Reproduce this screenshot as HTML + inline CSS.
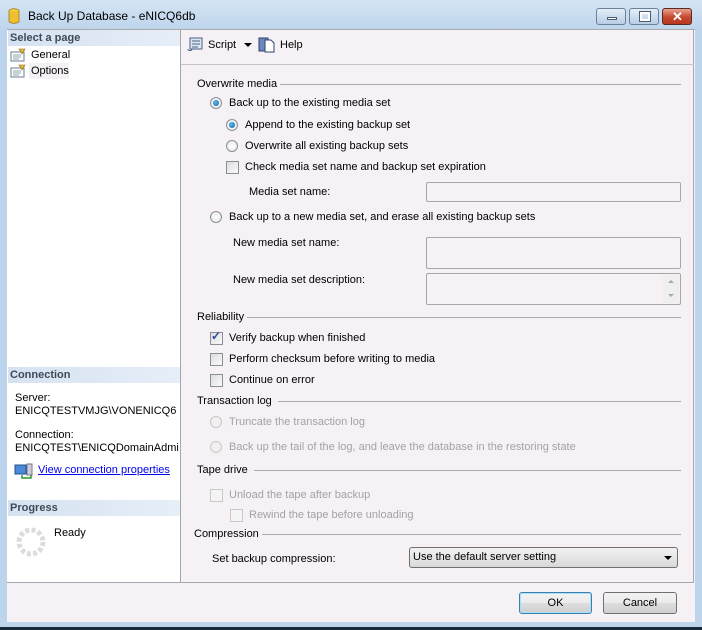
<!DOCTYPE html>
<html><head><style>
*{margin:0;padding:0;box-sizing:border-box}
body{width:702px;height:630px;overflow:hidden;background:#bcd4ec;font-family:"Liberation Sans",Arial,sans-serif;font-size:11px;color:#000;position:relative}
.a{position:absolute;white-space:nowrap}
.t{line-height:13px}
.title{left:0;top:0;width:702px;height:29px;background:linear-gradient(#d5e4f4,#bed5ec)}
.hdr{position:absolute;left:8px;width:172px;height:16px;background:linear-gradient(90deg,#d6e2f1,#e6eef8);font-weight:bold;color:#3e4a57;font-size:11px;line-height:16px;padding-left:2px}
.radio{position:absolute;width:12px;height:12px;border-radius:50%;border:1px solid #8a9199;background:radial-gradient(circle,#fff 0,#e4e4e4 100%)}
.radio.on::after{content:"";position:absolute;left:2px;top:2px;width:6px;height:6px;border-radius:50%;background:radial-gradient(circle at 40% 40%,#5cc0f0,#0a5a9c)}
.radio.dis{border-color:#c9c9c9;background:#f0f0f0}
.cb{position:absolute;width:13px;height:13px;border:1px solid #8a8f96;background:linear-gradient(135deg,#dcdcdc,#fafafa)}
.cb.dis{border-color:#c9c9c9;background:#f4f4f4}
.line{position:absolute;height:1px;background:#a9a9a9}
.box{position:absolute;border:1px solid #a7a7a7;border-radius:2px;background:#f5f1f5}
.gray{color:#a3a3a3}
.btn{position:absolute;height:22px;border:1px solid #707070;border-radius:3px;background:linear-gradient(#f2f2f2 0,#ebebeb 50%,#dddddd 51%,#cfcfcf 100%);text-align:center;line-height:20px}
</style></head><body>
<div class="a title"></div>
<svg class="a" style="left:8px;top:8px" width="12" height="16"><ellipse cx="6" cy="3" rx="5" ry="2.2" fill="#f7d64a" stroke="#a07a10" stroke-width=".8"/><path d="M1 3v10c0 1.3 2.2 2.3 5 2.3s5-1 5-2.3V3" fill="#f0c030" stroke="#a07a10" stroke-width=".8"/></svg>
<div class="a t" style="left:28px;top:10px;font-size:12px">Back Up Database - eNICQ6db</div>
<div class="a" style="left:596px;top:8px;width:30px;height:17px;border:1px solid #6a7f9a;border-radius:3px;background:linear-gradient(#e4eef9,#b8cde4)"><div class="a" style="left:10px;top:8px;width:10px;height:3px;background:#fff;border:1px solid #4b5c70"></div></div>
<div class="a" style="left:629px;top:8px;width:30px;height:17px;border:1px solid #6a7f9a;border-radius:3px;background:linear-gradient(#e4eef9,#b8cde4)"><div class="a" style="left:10px;top:3px;width:10px;height:9px;border:2px solid #fff;outline:1px solid #4b5c70"></div></div>
<div class="a" style="left:662px;top:8px;width:30px;height:17px;border:1px solid #5a2a20;border-radius:3px;background:linear-gradient(#e9a18f,#c4472e 55%,#b8381f)"><div class="a" style="left:9px;top:0;color:#fff;font-weight:bold;font-size:13px;line-height:15px">✕</div></div>

<!-- client -->
<div class="a" style="left:7px;top:29px;width:688px;height:593px;background:#f5f1f5;border-top:1px solid #a9a9a9"></div>
<div class="a" style="left:7px;top:30px;width:174px;height:553px;background:#fff;border-right:1px solid #a6a6ae;border-bottom:1px solid #a6a6ae"></div>
<div class="a" style="left:181px;top:30px;width:513px;height:553px;border-right:1px solid #a6a6ae;border-bottom:1px solid #a6a6ae"></div>
<div class="a" style="left:181px;top:64px;width:513px;height:1px;background:#c6c3c8"></div>
<div class="a" style="left:0;top:627px;width:702px;height:3px;background:#1a2a3a"></div>

<div class="hdr" style="top:30px">Select a page</div>
<svg class="a" style="left:10px;top:48px" width="18" height="14"><rect x="1" y="4" width="13" height="9" fill="#fff" stroke="#6b7b99"/><path d="M3 7h8M3 9h8M3 11h6" stroke="#8aa"/><path d="M9 1l6 0 -3 5z" fill="#e5b832" stroke="#8a6a10" stroke-width=".6"/></svg>
<div class="a t" style="left:31px;top:49px">General</div>
<div class="a" style="left:29px;top:63px;width:40px;height:16px;background:#f3f1f3"></div>
<svg class="a" style="left:10px;top:64px" width="18" height="14"><rect x="1" y="4" width="13" height="9" fill="#fff" stroke="#6b7b99"/><path d="M3 7h8M3 9h8M3 11h6" stroke="#8aa"/><path d="M9 1l6 0 -3 5z" fill="#e5b832" stroke="#8a6a10" stroke-width=".6"/></svg>
<div class="a t" style="left:31px;top:65px">Options</div>

<div class="hdr" style="top:367px">Connection</div>
<div class="a t" style="left:15px;top:392px">Server:</div>
<div class="a t" style="left:15px;top:405px;width:164px;overflow:hidden">ENICQTESTVMJG\VONENICQ6</div>
<div class="a t" style="left:15px;top:429px">Connection:</div>
<div class="a t" style="left:15px;top:442px;width:164px;overflow:hidden">ENICQTEST\ENICQDomainAdmin</div>
<svg class="a" style="left:14px;top:463px" width="20" height="16"><rect x="1" y="2" width="11" height="9" fill="#4a8ad8" stroke="#23508a"/><rect x="13" y="1" width="5" height="11" fill="#ccd" stroke="#778"/><path d="M8 12v3h9v-3" fill="none" stroke="#2a9a2a" stroke-width="1.5"/></svg>
<div class="a t" style="left:38px;top:464px;color:#0000ee;text-decoration:underline">View connection properties</div>

<div class="hdr" style="top:500px">Progress</div>
<svg class="a" style="left:15px;top:526px" width="32" height="32"><circle cx="16" cy="16" r="12" fill="none" stroke="#dcdcdc" stroke-width="5" stroke-dasharray="4 2.3"/></svg>
<div class="a t" style="left:54px;top:527px">Ready</div>

<!-- toolbar -->
<svg class="a" style="left:187px;top:36px" width="18" height="17"><path d="M3 2h12v11H3z" fill="#dfe7f3" stroke="#4a5f86"/><path d="M1 13c0 2 4 2 4 0M5 5h8M5 8h8M5 11h6" stroke="#4a5f86" fill="none"/></svg>
<div class="a t" style="left:208px;top:39px">Script</div>
<div class="a" style="left:244px;top:43px;border-left:4px solid transparent;border-right:4px solid transparent;border-top:4px solid #000"></div>
<svg class="a" style="left:258px;top:36px" width="18" height="17"><rect x="1" y="2" width="9" height="13" fill="#6d88b8" stroke="#2d4470"/><path d="M7 4h6l3 3v9H7z" fill="#fff" stroke="#2d4470"/></svg>
<div class="a t" style="left:280px;top:39px">Help</div>

<!-- content -->
<div class="a t" style="left:197px;top:78px">Overwrite media</div><div class="line" style="left:280px;top:84px;width:401px"></div>
<div class="radio on" style="left:210px;top:97px"></div><div class="a t" style="left:229px;top:97px">Back up to the existing media set</div>
<div class="radio on" style="left:226px;top:119px"></div><div class="a t" style="left:245px;top:119px">Append to the existing backup set</div>
<div class="radio" style="left:226px;top:140px"></div><div class="a t" style="left:245px;top:140px">Overwrite all existing backup sets</div>
<div class="cb" style="left:226px;top:161px"></div><div class="a t" style="left:245px;top:161px">Check media set name and backup set expiration</div>
<div class="a t" style="left:249px;top:186px">Media set name:</div>
<div class="box" style="left:426px;top:182px;width:255px;height:20px"></div>
<div class="radio" style="left:210px;top:211px"></div><div class="a t" style="left:229px;top:211px">Back up to a new media set, and erase all existing backup sets</div>
<div class="a t" style="left:233px;top:237px">New media set name:</div>
<div class="box" style="left:426px;top:237px;width:255px;height:32px"></div>
<div class="a t" style="left:233px;top:274px">New media set description:</div>
<div class="box" style="left:426px;top:273px;width:255px;height:32px"></div>
<div class="a" style="left:663px;top:275px;width:16px;height:28px;background:#efefef"></div>
<div class="a" style="left:668px;top:280px;border-left:3px solid transparent;border-right:3px solid transparent;border-bottom:3px solid #aaa"></div>
<div class="a" style="left:668px;top:294px;border-left:3px solid transparent;border-right:3px solid transparent;border-top:3px solid #aaa"></div>

<div class="a t" style="left:197px;top:311px">Reliability</div><div class="line" style="left:247px;top:317px;width:434px"></div>
<div class="cb" style="left:210px;top:332px"></div><div class="a" style="left:211px;top:329px;color:#2a4a9a;font-size:12px;font-weight:bold">✓</div><div class="a t" style="left:229px;top:332px">Verify backup when finished</div>
<div class="cb" style="left:210px;top:353px"></div><div class="a t" style="left:229px;top:353px">Perform checksum before writing to media</div>
<div class="cb" style="left:210px;top:374px"></div><div class="a t" style="left:229px;top:374px">Continue on error</div>
<div class="a t" style="left:197px;top:395px">Transaction log</div><div class="line" style="left:278px;top:401px;width:403px"></div>
<div class="radio dis" style="left:210px;top:416px"></div><div class="a t gray" style="left:229px;top:416px">Truncate the transaction log</div>
<div class="radio dis" style="left:210px;top:441px"></div><div class="a t gray" style="left:229px;top:441px">Back up the tail of the log, and leave the database in the restoring state</div>
<div class="a t" style="left:197px;top:464px">Tape drive</div><div class="line" style="left:254px;top:470px;width:427px"></div>
<div class="cb dis" style="left:210px;top:489px"></div><div class="a t gray" style="left:229px;top:489px">Unload the tape after backup</div>
<div class="cb dis" style="left:230px;top:509px"></div><div class="a t gray" style="left:249px;top:509px">Rewind the tape before unloading</div>
<div class="a t" style="left:194px;top:528px">Compression</div><div class="line" style="left:262px;top:534px;width:419px"></div>
<div class="a t" style="left:212px;top:553px">Set backup compression:</div>
<div class="a t" style="left:409px;top:547px;width:269px;height:21px;border:1px solid #707070;border-radius:3px;background:linear-gradient(#f2f2f2,#e6e6e6 50%,#d8d8d8);padding:3px 0 0 3px">Use the default server setting</div>
<div class="a" style="left:664px;top:556px;border-left:4px solid transparent;border-right:4px solid transparent;border-top:4px solid #000"></div>

<div class="btn" style="left:519px;top:592px;width:73px;border-color:#3c7fb1;box-shadow:inset 0 0 0 1px #a5e0f8">OK</div>
<div class="btn" style="left:603px;top:592px;width:74px">Cancel</div>
</body></html>
